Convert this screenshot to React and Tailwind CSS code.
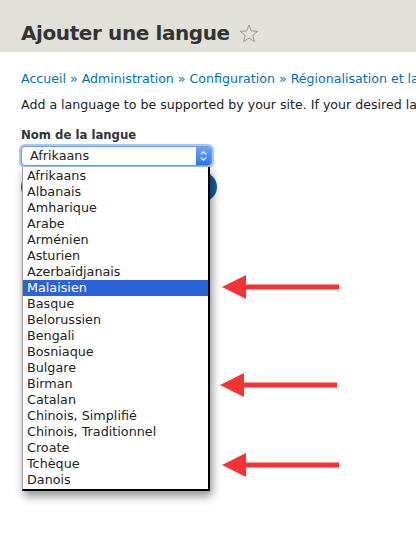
import React from 'react';

const langues = [
  'Afrikaans',
  'Albanais',
  'Amharique',
  'Arabe',
  'Arménien',
  'Asturien',
  'Azerbaïdjanais',
  'Malaisien',
  'Basque',
  'Belorussien',
  'Bengali',
  'Bosniaque',
  'Bulgare',
  'Birman',
  'Catalan',
  'Chinois, Simplifié',
  'Chinois, Traditionnel',
  'Croate',
  'Tchèque',
  'Danois',
];

function Star() {
  return (
    <svg width="20" height="19" viewBox="0 0 20 19" className="ml-[9px] mt-[14px]">
      <polygon
        points="10,1 12.4,7 18.8,7.3 13.8,11.3 15.5,17.6 10,14 4.5,17.6 6.2,11.3 1.2,7.3 7.6,7"
        fill="none"
        stroke="#9a9a9a"
        strokeWidth="1"
        strokeLinejoin="round"
      />
    </svg>
  );
}

function Arrows() {
  // annotation arrows drawn over the screenshot
  const arrow = (tipX, y, key) => (
    <g key={key} fill="#f53333">
      <polygon points={`${tipX},${y} ${tipX + 24},${y - 12} ${tipX + 24},${y + 12}`} />
      <rect x={tipX + 20} y={y - 2.5} width={97} height={5} />
    </g>
  );
  return (
    <svg className="absolute left-0 top-0 pointer-events-none" width="416" height="553">
      {arrow(222, 287, 'a')}
      {arrow(220, 385, 'b')}
      {arrow(222, 465, 'c')}
    </svg>
  );
}

export default function App() {
  return (
    <div
      className="relative w-[416px] h-[553px] overflow-hidden bg-white text-[#222]"
      style={{ fontFamily: '"DejaVu Sans", Verdana, sans-serif' }}
    >
      {/* Header */}
      <div className="h-[52px] bg-[#e1e0d9] pl-[21px] flex items-center">
        <h1 className="text-[20px] font-bold tracking-[-0.4px] text-[#333] pt-[14px]">Ajouter une langue</h1>
        <Star />
      </div>

      <div className="pl-[21px]">
        {/* Breadcrumb */}
        <div className="mt-[18px] text-[12.6px] leading-[18px] text-[#0071b8] whitespace-nowrap">
          Accueil » Administration » Configuration » Régionalisation et langue
        </div>

        {/* Description */}
        <p className="mt-[8px] text-[12.6px] leading-[18px] whitespace-nowrap">
          Add a language to be supported by your site. If your desired language is not available
        </p>

        {/* Form */}
        <div className="mt-[13px]">
          <label className="block text-[11.7px] font-bold leading-[16px] text-[#333]">Nom de la langue</label>
          <div className="relative mt-[3px] w-[191px]">
            <div className="h-[20px] rounded-[4px] border border-[#6d9de9] shadow-[0_0_0_2px_#a9c6f5] bg-white flex items-center overflow-hidden">
              <span className="flex-1 pl-[8px] text-[12.75px] leading-[16px]">Afrikaans</span>
              <div className="w-[15px] h-full bg-gradient-to-b from-[#6aa6fb] to-[#2f74ea] flex flex-col items-center justify-center gap-[2px]">
                <svg width="7" height="4" viewBox="0 0 7 4">
                  <path d="M0.8 3.4 L3.5 0.8 L6.2 3.4" fill="none" stroke="white" strokeWidth="1.2" />
                </svg>
                <svg width="7" height="4" viewBox="0 0 7 4">
                  <path d="M0.8 0.6 L3.5 3.2 L6.2 0.6" fill="none" stroke="white" strokeWidth="1.2" />
                </svg>
              </div>
            </div>

            {/* Button hidden behind the open list */}
            <div className="mt-[6px] h-[30px] w-[196px] rounded-[15px] bg-[#17609f]"></div>

            {/* Open dropdown list */}
            <ul className="absolute left-[1px] top-[21px] w-[188px] bg-white border-l border-l-[#9c9c9c] border-r-2 border-r-black border-b-2 border-b-black shadow-[2px_5px_9px_rgba(0,0,0,0.45)] pt-[1px] pb-[1px]">
              {langues.map((l) => (
                <li
                  key={l}
                  className={
                    l === 'Malaisien'
                      ? 'h-[16px] leading-[16px] pl-[4px] text-[12.75px] bg-[#2a63d6] text-white'
                      : 'h-[16px] leading-[16px] pl-[4px] text-[12.75px] text-[#222]'
                  }
                >
                  {l}
                </li>
              ))}
            </ul>
          </div>
        </div>
      </div>

      <Arrows />
    </div>
  );
}
